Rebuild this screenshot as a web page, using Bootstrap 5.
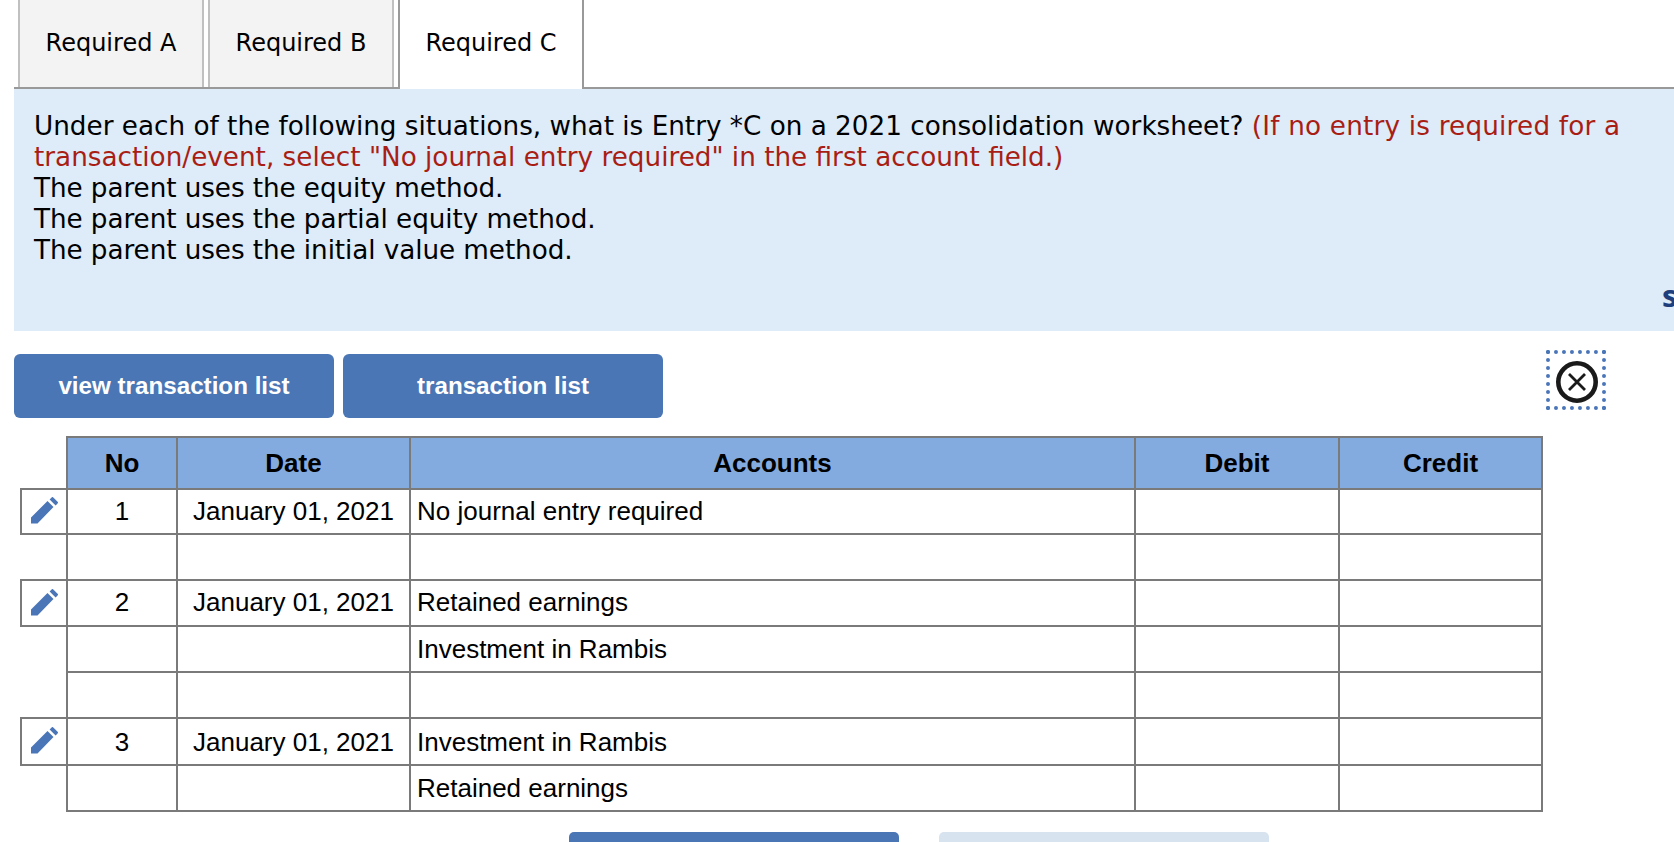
<!doctype html>
<html lang="en"><head><meta charset="utf-8">
<link href="https://cdn.jsdelivr.net/npm/bootstrap@5.3.0/dist/css/bootstrap.min.css" rel="stylesheet">
<style>
html,body{height:842px;overflow:hidden;background:#fff}
body{font-family:"DejaVu Sans",sans-serif;color:#000}
.tabline{height:89px;margin-left:14px;padding-left:4px;gap:4px;border-bottom:2px solid #999}
.tabitem{width:186px;height:87px;background:#f3f3f3;border:2px solid #c0c0c0;border-top:0;border-bottom:0;font-size:24px;padding-top:25px;text-align:center;color:#000;text-decoration:none}
.tabitem.on{background:#fff;border-color:#999;height:89px}
.qbox{margin-left:14px;background:#deebf8;height:242px;padding:22px 20px 0;font-size:26.25px;line-height:31px;position:relative}
.qred{color:#a81e14}
.qwide{letter-spacing:.2px}
.qtight{letter-spacing:-.08px}
.cutword{position:absolute;left:1648px;top:186px;font:700 31px "Open Sans",sans-serif;color:#1f3f7c;line-height:40px}
.bar{margin:23px 0 18px 14px;height:64px}
.blu{width:320px;height:64px;background:#4a76b5;border:0;border-radius:6px;color:#fff;font:700 24.2px "Liberation Sans",sans-serif;margin-right:9px}
.closer{width:60px;height:60px;border:4px dotted #4a76b8;position:absolute;left:1546px;top:350px;display:flex;align-items:center;justify-content:center;padding:3px 0 0 2px}
.grid{margin-left:20px;border-collapse:collapse;font:26px "Liberation Sans",sans-serif;table-layout:fixed;width:1522px;color:#000}
.grid td,.grid th{border:2px solid #7a7a7a;padding:0 6px;white-space:nowrap;overflow:hidden}
.grid th{background:#84abdf;text-align:center;font-weight:700;height:52px}
.grid td{height:46px}
.grid tr.rshort td{height:45px}
.grid tr.rup td{padding-bottom:2px}
.grid tr.rtall td{height:47px;padding-top:2px}
.grid .nb{border:0;background:none;padding:0}
.grid td.pen{border:2px solid #7a7a7a;padding:0 0 2px 9px;vertical-align:middle;line-height:0}
.grid tr.rtall td.pen{padding:0 0 2px 9px}
.cw0{width:46px}.cw1{width:110px}.cw2{width:233px}.cw3{width:725px}.cw4{width:204px}.cw5{width:203px}
.ctr{text-align:center}
.footbtns{margin-top:20px;padding-left:569px;gap:40px}
.fb{width:330px;height:22px;border-radius:5px 5px 0 0}
.fb1{background:#4a76b5}.fb2{background:#d8e3f0}
</style></head><body>
<svg width="0" height="0" class="d-block position-absolute"><defs><symbol id="pn" viewBox="0 0 27 27"><path fill="#4a76b8" d="M0 20.5 16.5 4l6 6L6.5 26.5H0ZM18.6 2.4 20.6.4a1.2 1.2 0 0 1 1.7 0l4.3 4.3a1.2 1.2 0 0 1 0 1.7l-2 2Z"/></symbol></defs></svg>
<div class="d-flex tabline">
<a class="tabitem" href="#">Required A</a><a class="tabitem" href="#">Required B</a><a class="tabitem on" href="#">Required C</a>
</div>
<div class="qbox">Under each of the following situations, what is Entry *C on a 2021 consolidation worksheet? <span class="qred"><span class="qwide">(If no entry is required for a</span> transaction/event, select "No journal entry required" in the first account field.)</span><br><span class="qtight">The parent uses the equity method.<br>The parent uses the partial equity method.<br>The parent uses the initial value method.</span><span class="cutword">s</span></div>
<div class="bar d-flex"><button class="blu">view transaction list</button><button class="blu">transaction list</button></div>
<div class="closer"><svg width="44" height="44" viewBox="0 0 44 44"><circle cx="22" cy="22" r="18.7" fill="none" stroke="#1a1a1a" stroke-width="4.6"/><path d="M14 14l16 16M30 14L14 30" stroke="#1a1a1a" stroke-width="2.8" fill="none"/></svg></div>
<table class="grid">
<colgroup><col class="cw0"><col class="cw1"><col class="cw2"><col class="cw3"><col class="cw4"><col class="cw5"></colgroup>
<tr><th class="nb"></th><th>No</th><th>Date</th><th>Accounts</th><th>Debit</th><th>Credit</th></tr>
<tr class="rshort"><td class="pen"><svg width="27" height="27"><use href="#pn"/></svg></td><td class="ctr">1</td><td class="ctr">January 01, 2021</td><td>No journal entry required</td><td></td><td></td></tr>
<tr><td class="nb"></td><td></td><td></td><td></td><td></td><td></td></tr>
<tr class="rup"><td class="pen"><svg width="27" height="27"><use href="#pn"/></svg></td><td class="ctr">2</td><td class="ctr">January 01, 2021</td><td>Retained earnings</td><td></td><td></td></tr>
<tr><td class="nb"></td><td></td><td></td><td>Investment in Rambis</td><td></td><td></td></tr>
<tr><td class="nb"></td><td></td><td></td><td></td><td></td><td></td></tr>
<tr class="rtall"><td class="pen"><svg width="27" height="27"><use href="#pn"/></svg></td><td class="ctr">3</td><td class="ctr">January 01, 2021</td><td>Investment in Rambis</td><td></td><td></td></tr>
<tr><td class="nb"></td><td></td><td></td><td>Retained earnings</td><td></td><td></td></tr>
</table>
<div class="d-flex footbtns"><div class="fb fb1"></div><div class="fb fb2"></div></div>
<script src="https://cdn.jsdelivr.net/npm/bootstrap@5.3.0/dist/js/bootstrap.bundle.min.js"></script>
</body></html>
